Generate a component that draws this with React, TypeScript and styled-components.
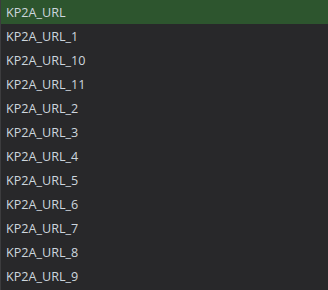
import React from "react";
import styled, { createGlobalStyle } from "styled-components";

const items = [
  "KP2A_URL",
  "KP2A_URL_1",
  "KP2A_URL_10",
  "KP2A_URL_11",
  "KP2A_URL_2",
  "KP2A_URL_3",
  "KP2A_URL_4",
  "KP2A_URL_5",
  "KP2A_URL_6",
  "KP2A_URL_7",
  "KP2A_URL_8",
  "KP2A_URL_9",
];

const GlobalStyle = createGlobalStyle`
  html, body {
    margin: 0;
    padding: 0;
    background: #28282a;
  }
`;

const List = styled.ul`
  list-style: none;
  margin: 0;
  padding: 0;
  width: 328px;
  height: 290px;
  box-sizing: border-box;
  border-left: 1px solid #3c3c3e;
  background: #28282a;
  overflow: hidden;
`;

const Row = styled.li<{ $selected?: boolean }>`
  height: 24px;
  display: flex;
  align-items: center;
  padding-left: 5px;
  background: ${({ $selected }) => ($selected ? "#2d552e" : "transparent")};
  color: #cdd6de;
  font-family: "Open Sans", "Noto Sans", sans-serif;
  font-size: 12.6px;
`;

const App: React.FC = () => (
  <>
    <GlobalStyle />
    <List>
      {items.map((name, i) => (
        <Row key={name} $selected={i === 0}>
          {name}
        </Row>
      ))}
    </List>
  </>
);

export default App;
